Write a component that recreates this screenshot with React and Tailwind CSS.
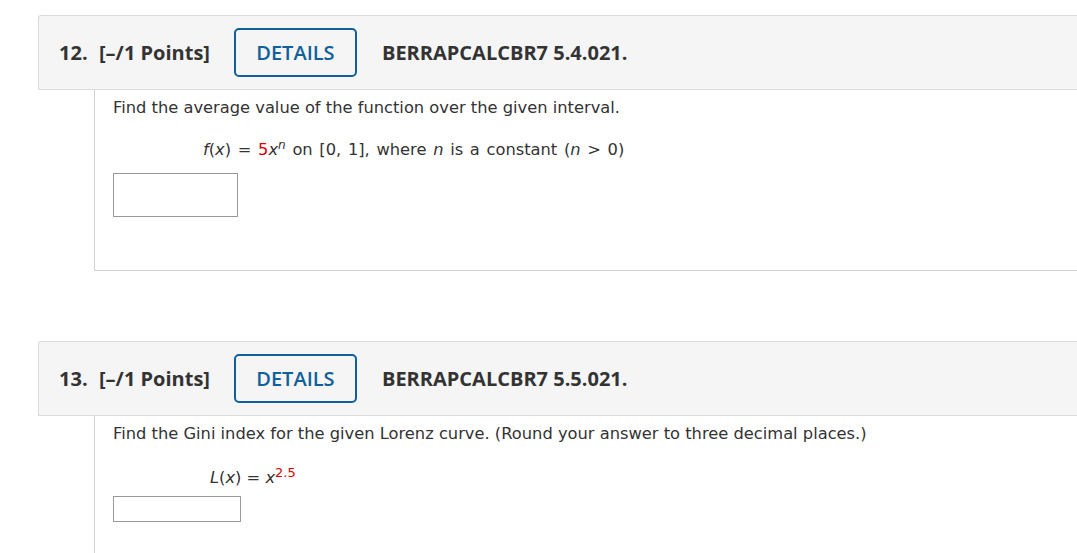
import React from "react";

const Header = ({ num, code }) => (
  <div className="ml-[38px] h-[75px] flex items-center bg-[#f5f5f5] border border-r-0 border-[#dcdcdc] rounded-tl-[3px] font-['Open_Sans',sans-serif] text-[20px] font-bold text-[#333]">
    <span className="ml-[20px] w-[40px]">{num}.</span>
    <span>[–/1 Points]</span>
    <button className="ml-[24px] w-[123px] h-[49px] border-2 border-[#10609c] rounded-[5px] text-[#10609c] font-semibold">
      DETAILS
    </button>
    <span className="ml-[25px]">{code}</span>
  </div>
);

export default function App() {
  return (
    <div className="h-[553px] w-full bg-white pt-[15px] font-['DejaVu_Sans',Verdana,sans-serif] text-[#333] overflow-hidden">
      {/* question 12 */}
      <Header num="12" code="BERRAPCALCBR7 5.4.021." />
      <div className="ml-[94px] border-l border-b border-[#d2d2d2] h-[181px] pl-[18px] pt-[8px]">
        <p className="text-[16.3px] leading-[20px]">Find the average value of the function over the given interval.</p>
        <p className="mt-[22px] ml-[90px] text-[16.3px] leading-[20px] [word-spacing:1.5px]">
          <i>f</i>(<i>x</i>) = <span className="text-[#d00]">5</span><i>x</i>
          <sup className="text-[12px] italic">n</sup> on [0, 1], where <i>n</i> is a constant (<i>n</i> &gt; 0)
        </p>
        <div className="mt-[13px] w-[125px] h-[44px] border border-[#999] bg-white" />
      </div>

      <div className="h-[70px]" />

      {/* question 13 */}
      <Header num="13" code="BERRAPCALCBR7 5.5.021." />
      <div className="ml-[94px] border-l border-[#d2d2d2] h-[137px] pl-[18px] pt-[8px]">
        <p className="text-[16.3px] leading-[20px]">
          Find the Gini index for the given Lorenz curve. (Round your answer to three decimal places.)
        </p>
        <p className="mt-[24px] ml-[97px] text-[16.3px] leading-[20px]">
          <i>L</i>(<i>x</i>) = <i>x</i>
          <sup className="text-[13px] text-[#d00] not-italic">2.5</sup>
        </p>
        <div className="mt-[8px] w-[128px] h-[26px] border border-[#999] bg-white" />
      </div>
    </div>
  );
}
